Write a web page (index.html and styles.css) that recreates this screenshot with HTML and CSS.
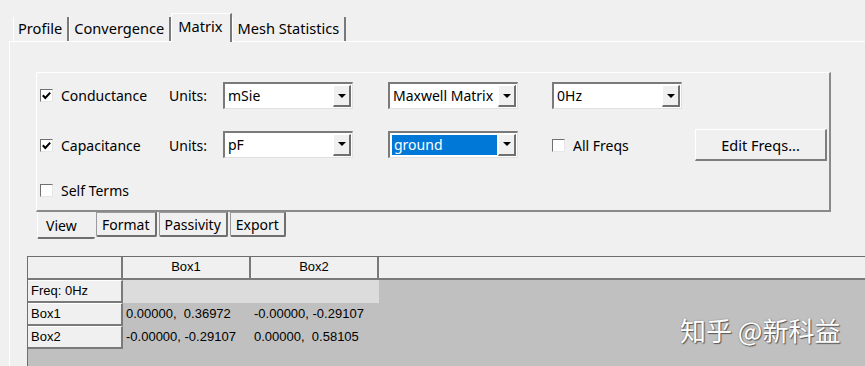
FILE: index.html
```html
<!DOCTYPE html>
<html>
<head>
    <meta content="text/html; charset=UTF-8" http-equiv="content-type">
    <title>Matrix</title>
    <link rel="stylesheet" href="styles.css">
</head>
<body>
    <div class="tabbar">
        <div class="tab">Profile</div>
        <div class="tab">Convergence</div>
        <div class="tab active">Matrix</div>
        <div class="tab">Mesh Statistics</div>
    </div>

    <div class="panel">
        <div class="group">
            <div class="row row1">
                <label class="chk"><span class="box"><svg width="11" height="11" viewBox="0 0 11 11"><path d="M1.8 5.3 L4.3 8 L9.2 2.6" fill="none" stroke="#000" stroke-width="2"/></svg></span>Conductance</label>
                <span class="units">Units:</span>
                <div class="combo"><span class="combo-text">mSie</span><span class="combo-btn"><i></i></span></div>
                <div class="combo"><span class="combo-text">Maxwell Matrix</span><span class="combo-btn"><i></i></span></div>
                <div class="combo"><span class="combo-text">0Hz</span><span class="combo-btn"><i></i></span></div>
            </div>
            <div class="row row2">
                <label class="chk"><span class="box"><svg width="11" height="11" viewBox="0 0 11 11"><path d="M1.8 5.3 L4.3 8 L9.2 2.6" fill="none" stroke="#000" stroke-width="2"/></svg></span>Capacitance</label>
                <span class="units">Units:</span>
                <div class="combo"><span class="combo-text">pF</span><span class="combo-btn"><i></i></span></div>
                <div class="combo"><span class="combo-text selected">ground</span><span class="combo-btn"><i></i></span></div>
                <label class="chk"><span class="box"></span>All Freqs</label>
                <button class="btn">Edit Freqs...</button>
            </div>
            <div class="row row3">
                <label class="chk"><span class="box"></span>Self Terms</label>
            </div>
        </div>

        <div class="subtabs">
            <div class="subtab active">View</div>
            <div class="subtab">Format</div>
            <div class="subtab">Passivity</div>
            <div class="subtab">Export</div>
        </div>

        <div class="grid">
            <div class="cell head corner"></div>
            <div class="cell head">Box1</div>
            <div class="cell head">Box2</div>
            <div class="cell head filler"></div>

            <div class="cell rowhead">Freq: 0Hz</div>
            <div class="cell freq"></div>
            <div class="cell freq"></div>
            <div class="cell"></div>

            <div class="cell rowhead">Box1</div>
            <div class="cell">0.00000,&nbsp; 0.36972</div>
            <div class="cell">-0.00000, -0.29107</div>
            <div class="cell"></div>

            <div class="cell rowhead">Box2</div>
            <div class="cell">-0.00000, -0.29107</div>
            <div class="cell">0.00000,&nbsp; 0.58105</div>
            <div class="cell"></div>
        </div>
    </div>

    <div class="watermark">知乎 @新科益</div>
</body>
</html>
```

FILE: styles.css
```css
body {
    margin: 0;
    height: 366px;
    overflow: hidden;
    background-color: #f0f0f0;
    color: #000;
    font-family: "Noto Sans", "Liberation Sans", sans-serif;
    font-size: 14px;
    position: relative;
}

/* top tabs */
.tabbar {
    display: flex;
    align-items: flex-end;
    padding: 13px 0 0 13px;
    height: 28px;
    font-size: 14.6px;
}

.tab {
    height: 24px;
    line-height: 23px;
    padding: 0 5px 0 4px;
    border-left: 1px solid #fff;
    border-right: 2px solid #7a7a7a;
    box-sizing: border-box;
    background-color: #f0f0f0;
}

.tab.active {
    height: 29px;
    line-height: 24px;
    padding: 0 8px 0 6px;
    margin-bottom: -1px;
    border-top: 1px solid #fff;
    position: relative;
}

.panel {
    margin-left: 9px;
    border-top: 1px solid #fff;
    border-left: 1px solid #fff;
    padding-top: 30px;
    height: 300px;
}

/* options group */
.group {
    margin-left: 26px;
    width: 795px;
    height: 140px;
    box-sizing: border-box;
    border-top: 1px solid #fff;
    border-left: 1px solid #fff;
    border-right: 2px solid #8a8a8a;
    border-bottom: 2px solid #8a8a8a;
    padding: 9px 0 0 3px;
}

.row {
    display: grid;
    grid-template-columns: 129px 54px 165px 164px 143px 132px;
    align-items: center;
}

.row1 { height: 27px; }
.row2 { height: 32px; margin-top: 20px; }
.row3 { height: 28px; margin-top: 15px; }

.chk {
    display: flex;
    align-items: center;
    gap: 8px;
}

.box {
    width: 13px;
    height: 13px;
    box-sizing: border-box;
    background: #fff;
    border-top: 1px solid #707070;
    border-left: 1px solid #707070;
    border-right: 1px solid #e6e6e6;
    border-bottom: 1px solid #e6e6e6;
    display: flex;
    align-items: center;
    justify-content: center;
}

.combo {
    width: 130px;
    height: 27px;
    box-sizing: border-box;
    background: #fff;
    border-top: 2px solid #7a7a7a;
    border-left: 2px solid #7a7a7a;
    border-right: 1px solid #e0e0e0;
    border-bottom: 1px solid #e0e0e0;
    display: flex;
    padding: 1px;
}

.row2 .combo {
    margin-top: -2px;
}

.combo-text {
    flex: 1;
    padding-left: 2px;
    line-height: 22px;
    white-space: nowrap;
    overflow: hidden;
}

.combo-text.selected {
    background-color: #0078d7;
    color: #fff;
    margin: 1px;
    line-height: 20px;
}

.combo-btn {
    width: 18px;
    box-sizing: border-box;
    background: #f0f0f0;
    border-top: 1px solid #fff;
    border-left: 1px solid #fff;
    border-right: 2px solid #707070;
    border-bottom: 2px solid #707070;
    display: flex;
    align-items: center;
    justify-content: center;
}

.combo-btn i {
    width: 0;
    height: 0;
    border-left: 4px solid transparent;
    border-right: 4px solid transparent;
    border-top: 4px solid #000;
}

.btn {
    width: 132px;
    height: 32px;
    font: inherit;
    font-size: 14.5px;
    color: #000;
    background: #f0f0f0;
    border-top: 1px solid #fff;
    border-left: 1px solid #fff;
    border-right: 2px solid #7d7d7d;
    border-bottom: 2px solid #7d7d7d;
    padding: 0;
}

/* bottom tabs of the group */
.subtabs {
    display: flex;
    margin-left: 27px;
}

.subtab {
    height: 25px;
    line-height: 23px;
    box-sizing: border-box;
    padding: 0 5px;
    border: 1px solid #9a9a9a;
    border-right: 2px solid #6f6f6f;
    border-bottom: 2px solid #6f6f6f;
    border-radius: 0 0 2px 2px;
    margin-right: 2px;
}

.subtab.active {
    height: 27px;
    width: 58px;
    border: none;
    border-left: 1px solid #fff;
    border-bottom: 2px solid #6f6f6f;
    padding: 2px 0 0 8px;
    margin-right: 1px;
}

/* matrix grid */
.grid {
    margin: 17px 0 0 17px;
    display: grid;
    grid-template-columns: 95px 128px 128px 1fr;
    grid-template-rows: 23px 23px 23px 23px;
    height: 120px;
    background-color: #c0c0c0;
    border-top: 1px solid #6e6e6e;
    border-left: 1px solid #6e6e6e;
    font-family: "Liberation Sans", Arial, sans-serif;
    font-size: 13px;
}

.cell {
    line-height: 22px;
    padding-left: 3px;
    white-space: nowrap;
}

.cell.head {
    background: #f0f0f0;
    text-align: center;
    padding-left: 0;
    border-right: 2px solid #7a7a7a;
    border-bottom: 2px solid #7a7a7a;
    line-height: 20px;
}

.cell.head.filler {
    border-right: none;
}

.cell.rowhead {
    background: #f0f0f0;
    border-top: 1px solid #fff;
    border-right: 2px solid #7a7a7a;
    border-bottom: 2px solid #7a7a7a;
    line-height: 19px;
}

.cell.freq {
    background: #dcdcdc;
}

.watermark {
    position: absolute;
    left: 680px;
    top: 311px;
    font-family: "Noto Sans CJK SC", sans-serif;
    font-size: 26px;
    color: #fff;
    text-shadow: 1px 1px 1px #555, 0 0 2px #888;
}
```
